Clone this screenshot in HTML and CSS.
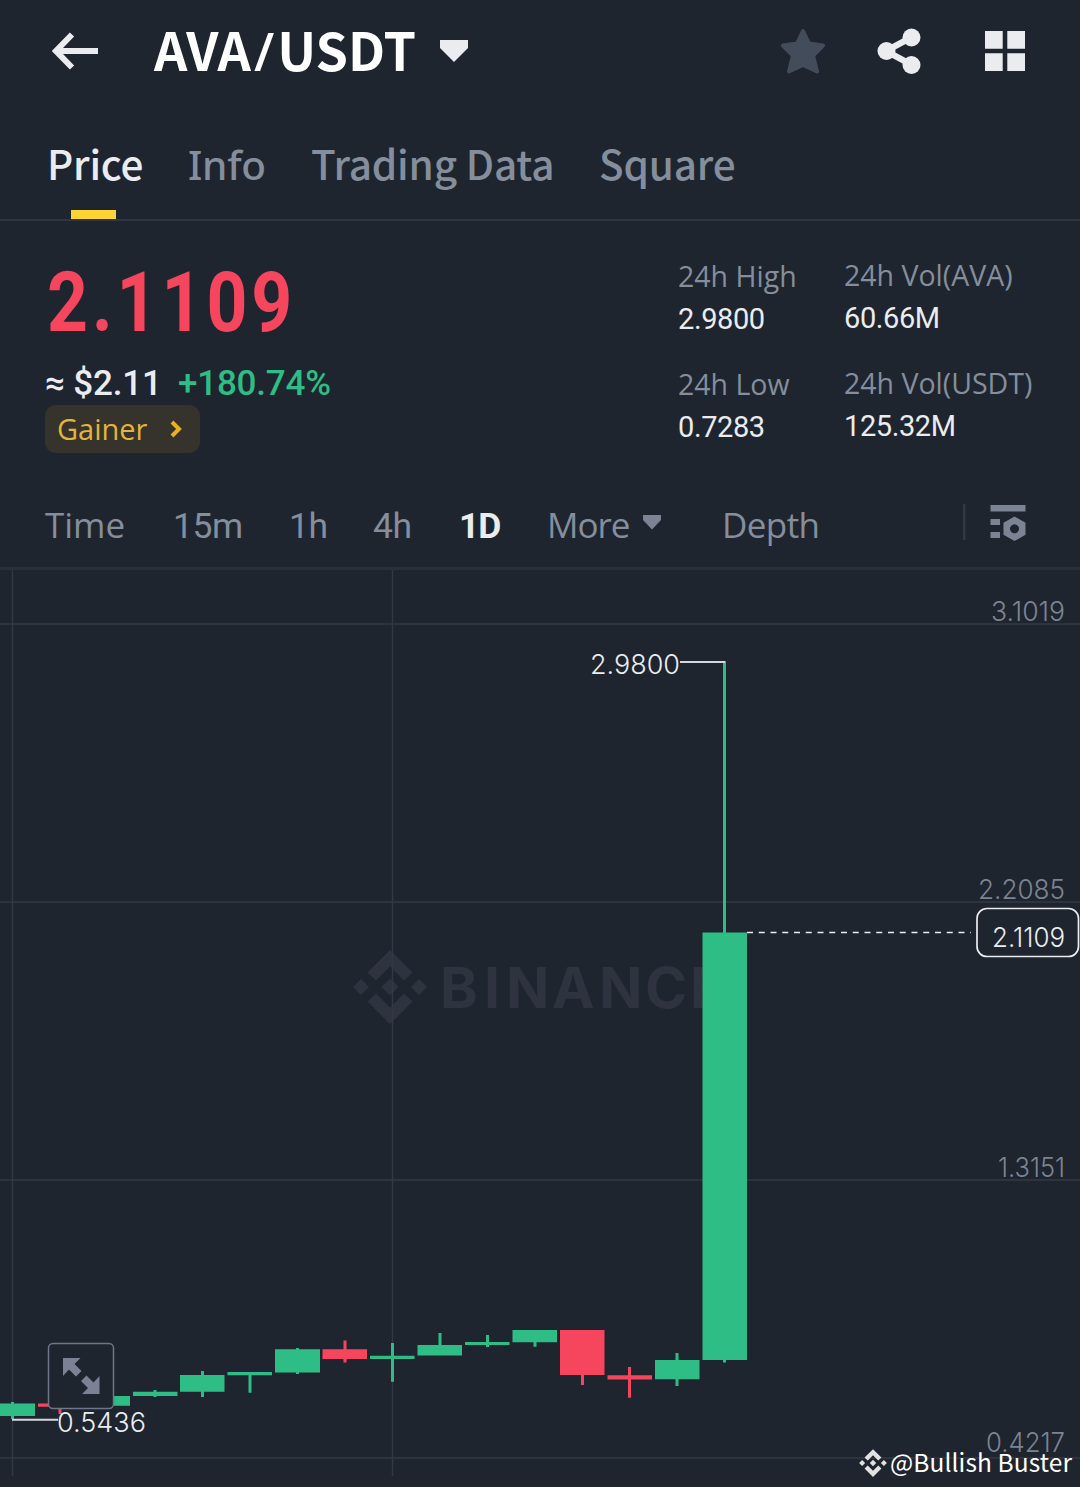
FILE: index.html
```html
<!DOCTYPE html>
<html lang="en">
<head>
<meta charset="utf-8">
<title>AVA/USDT</title>
<link rel="stylesheet" href="styles.css">
</head>
<body>
<header class="topbar">
  <svg class="back" width="46" height="38" viewBox="0 0 46 38"><path d="M20 2.500 4 19l16 16.500M4 19h42" fill="none" stroke="#eaecef" stroke-width="6"/></svg>
  <h1 class="pair"><span>AVA</span><span class="slash">/</span><span>USDT</span></h1>
  <svg class="caret" width="28" height="22" viewBox="0 0 28 22"><path d="M0 0h28v8L14 22 0 8z" fill="#eaecef"/></svg>
  <div class="actions">
    <svg width="46" height="46" viewBox="0 0 46 46"><path d="M23 3l6 12.500 14 2-10 10L37 43.500l-14-6.500-14 6.500 4-16-10-10 14-2z" fill="#434c5a" stroke="#434c5a" stroke-width="4" stroke-linejoin="round"/></svg>
    <svg width="44" height="46" viewBox="0 0 44 46"><path d="M35 9 9 23l26 14" fill="none" stroke="#eaecef" stroke-width="6.500"/><g fill="#eaecef"><circle cx="34.500" cy="9.500" r="9"/><circle cx="9.500" cy="23" r="9"/><circle cx="34.500" cy="37" r="9"/></g></svg>
    <svg width="40" height="40" viewBox="0 0 40 40"><path d="M0 0h17.700v17.700H0zM22.300 0H40v17.700H22.300zM0 22.300h17.700V40H0zM22.300 22.300H40V40H22.300z" fill="#eaecef"/></svg>
  </div>
</header>
<nav class="tabs">
  <a class="tab tab-price active"><span>Price</span></a>
  <a class="tab tab-info"><span>Info</span></a>
  <a class="tab tab-data"><span>Trading Data</span></a>
  <a class="tab tab-square"><span>Square</span></a>
</nav>
<section class="summary">
  <div class="quote">
    <div class="last"><span>2.1109</span></div>
    <div class="sub"><span class="fiat">≈ $2.11</span><span class="change">+180.74%</span></div>
    <a class="badge"><span>Gainer</span><svg width="13" height="18" viewBox="0 0 13 18"><path d="M2 2l7 7-7 7" fill="none" stroke="#e9b11f" stroke-width="4"/></svg></a>
  </div>
  <div class="stats">
    <div class="stat"><span class="label">24h High</span><span class="value">2.9800</span></div>
    <div class="stat"><span class="label">24h Low</span><span class="value">0.7283</span></div>
  </div>
  <div class="stats stats-volume">
    <div class="stat"><span class="label">24h Vol(AVA)</span><span class="value">60.66M</span></div>
    <div class="stat"><span class="label">24h Vol(USDT)</span><span class="value">125.32M</span></div>
  </div>
</section>
<nav class="intervals">
  <a class="iv time"><span>Time</span></a>
  <a class="iv num m15"><span>15m</span></a>
  <a class="iv num h1"><span>1h</span></a>
  <a class="iv num h4"><span>4h</span></a>
  <a class="iv num d1"><span>1D</span></a>
  <a class="iv more"><span>More</span></a>
  <svg class="more-caret" width="18" height="15" viewBox="0 0 18 15"><path d="M0 0h18v5L9 14.500 0 5z" fill="#7c8494"/></svg>
  <a class="iv depth"><span>Depth</span></a>
  <svg class="settings" width="63" height="38" viewBox="963 504 63 38"><path d="M963 504h2.500v36H963z" fill="#323945"/><path d="M990.500 505h35v6.500h-35zM990.500 519h9.500v6h-9.500zM990.500 532h9.500v6h-9.500z" fill="#7c8494"/><path fill-rule="evenodd" d="M1014.500 516.500l11 6.300v11.900l-11 6.300-11-6.300v-11.900zM1014.500 524.300a4.500 4.500 0 1 0 .01 0z" fill="#7c8494"/></svg>
</nav>
<main class="chart">
<svg width="1080" height="917" viewBox="0 570 1080 917">
  <defs>
    <g id="mark"><path d="M0-37 22.500-14.500 14-6.500 0-20.500-14-6.500-22.500-14.500zM0 37 22.500 14.500 14 6.500 0 20.500-14 6.500-22.500 14.500zM0-8.500 8.500 0 0 8.500-8.500 0zM-29-8-21 0-29 8-37 0zM29-8 37 0 29 8 21 0z"/></g>
  </defs>
  <g fill="#2e333f"><use href="#mark" x="390" y="987"/><text class="wordmark" y="1008" x="440 484 506 552 599 645 690">BINANCE</text></g>
  <path d="M0 624h1080M0 902h1080M0 1180h1080M0 1458h1080" stroke="#2d343f" stroke-width="2"/>
  <path d="M12.500 570v906M392.500 570v906" stroke="#323944" stroke-width="1.500"/>
  <g class="axis">
    <text x="991" y="621" textLength="74" lengthAdjust="spacingAndGlyphs">3.1019</text>
    <text x="978" y="899" textLength="87" lengthAdjust="spacingAndGlyphs">2.2085</text>
    <text x="998" y="1177" textLength="67" lengthAdjust="spacingAndGlyphs">1.3151</text>
    <text x="986" y="1452" textLength="79" lengthAdjust="spacingAndGlyphs">0.4217</text>
  </g>
  <g class="up">
    <path d="M12.500 1402v17M155 1390v7M202.500 1371v26M250 1373v19.700M297.500 1348v26M392.500 1343v38.700M440 1333v20M487.500 1335v12M535 1340v6.700M677 1353v33M724.500 661v701.500"/>
    <path class="body" d="M0 1403.500h35v12.500H0zM85.500 1396H130v9.700H85.500zM133 1391.700h44.500v4.300H133zM180 1375h44.500v16.700H180zM227.500 1372h44.500v3.200h-44.500zM275 1349.300h45v23.300h-45zM370 1355.700h44.500v3.300H370zM417.500 1345H462v10.500h-44.500zM465 1342h44.500v3H465zM512.500 1330H557v12.300h-44.500zM655 1360h44.500v19.300H655zM702.500 932.500H747V1360h-44.500z"/>
  </g>
  <g class="down">
    <path d="M60 1405v9M345 1340.500v22M582.500 1370v15M629.500 1367v30.700"/>
    <path class="body" d="M38 1403.500h44.500v3.200H38zM322.500 1349.300H367v9.700h-44.500zM560 1330h44.500v45H560zM607.500 1375.300H652v4.300h-44.500z"/>
  </g>
  <path d="M680 662h45M12 1419.700h46" stroke="#d5d8de" stroke-width="2"/>
  <path d="M747 932.500h224" stroke="#eaecef" stroke-width="1.700" stroke-dasharray="6 5.750"/>
  <rect x="977" y="908.500" width="101.500" height="48" rx="10" fill="#1f252f" stroke="#eaecef" stroke-width="1.700"/>
  <g class="mark-text">
    <text x="590" y="674" textLength="90" lengthAdjust="spacingAndGlyphs">2.9800</text>
    <text x="992" y="947" textLength="73" lengthAdjust="spacingAndGlyphs">2.1109</text>
    <text x="57" y="1432" textLength="89" lengthAdjust="spacingAndGlyphs">0.5436</text>
  </g>
  <rect x="48.500" y="1343.500" width="65" height="65" rx="4.500" fill="#1f252f" stroke="#6f7687" stroke-width="1.500"/>
  <path d="M63 1358h17.500l-6 6 7 7-5.500 5.500-7-7-6 6.500zM99.500 1394H82l6-6-7-7 5.500-5.500 7 7 6-6.500z" fill="#7c8296"/>
  <use href="#mark" transform="translate(873 1463) scale(.375)" fill="#e2e2e2"/>
  <text class="credit" x="890" y="1472" textLength="182">@Bullish Buster</text>
</svg>
</main>
</body>
</html>
```
FILE: styles.css
```css
* { box-sizing: border-box; }
body { margin: 0; width: 1080px; height: 1487px; overflow: hidden; background: #1f252f; color: #eaecef; font-family: "Open Sans", "Noto Sans", sans-serif; }
svg { display: block; flex: none; }
span { white-space: nowrap; }

.topbar { display: flex; align-items: center; height: 104px; padding: 0 55px 2px 52px; }
.pair { display: flex; align-items: baseline; justify-content: space-between; width: 262px; margin: 0 24px 2px 56px; font-family: "Noto Sans CJK SC", sans-serif; font-size: 52px; line-height: 60px; font-weight: 700; color: #fff; }
.slash { font-family: "Open Sans", sans-serif; font-weight: 600; }
.actions { display: flex; align-items: center; margin-left: auto; }
.actions svg + svg { margin-left: 51px; }
.actions svg + svg + svg { margin-left: 64px; }

.tabs { display: flex; gap: 46px; height: 117px; padding: 34px 47px 0; border-bottom: 2px solid #2f3541; font-family: "Noto Sans CJK SC", sans-serif; font-size: 40.5px; line-height: 50px; font-weight: 500; letter-spacing: -0.2px; color: #848e9c; }
.active { display: flex; flex-direction: column; color: #eaecef; }
.active::after { content: ""; width: 45px; height: 9px; margin: 22px 0 0 24px; background: #fcd535; }
.tab-price { width: 95px; }
.tab-info { width: 77px; padding-top: 2px; font-family: "Noto Sans", sans-serif; letter-spacing: -0.3px; }
.tab-data { width: 242px; }
.tab-square { width: 135px; }

.summary { display: flex; height: 260px; padding-left: 45px; }
.quote { width: 633px; padding-top: 42px; font-family: Roboto, sans-serif; }
.last { font-size: 83px; line-height: 80px; font-weight: 700; color: #f6465d; letter-spacing: 4.6px; }
.last span { display: inline-block; transform: scaleX(.86); transform-origin: 0 0; margin-left: 2px; }
.sub { display: flex; gap: 18px; height: 44px; margin-top: 18px; padding-top: 1px; font-size: 35px; line-height: 44px; font-weight: 500; letter-spacing: -0.2px; }
.fiat { width: 115px; }
.change { color: #2ebd85; }
.badge { display: flex; align-items: center; justify-content: space-between; width: 155px; height: 48px; padding: 0 17px 0 12px; border-radius: 11px; background: #35332b; color: #e3b53a; font-family: "Open Sans", sans-serif; font-size: 29px; line-height: 46px; }
.stats { display: flex; flex-direction: column; gap: 23px; width: 166px; padding-top: 34px; }
.stats-volume { padding-top: 33px; }
.stat { display: flex; flex-direction: column; gap: 1px; line-height: 42px; }
.label { font-size: 28.5px; color: #848e9c; }
.value { font-family: Roboto, sans-serif; font-size: 29px; letter-spacing: -0.4px; }

.intervals { display: flex; align-items: baseline; height: 89px; padding: 19px 0 0 45px; border-bottom: 3px solid #29303a; font-size: 35px; line-height: 50px; color: #848e9c; }
.num { font-family: Roboto, sans-serif; font-size: 35.5px; letter-spacing: -0.5px; }
.time { width: 128px; }
.m15 { width: 116px; }
.h1 { width: 84px; }
.h4 { width: 86px; }
.d1 { width: 88px; font-weight: 700; color: #eaecef; letter-spacing: -1px; }
.more { width: 96px; letter-spacing: -1px; }
.more-caret { align-self: flex-start; margin: 15px 61px 0 0; }
.depth { width: 241px; letter-spacing: -0.6px; }
.settings { align-self: flex-start; margin-top: 4px; }

.chart { height: 917px; }
.axis text, .mark-text text { font-family: Inter, sans-serif; font-size: 26.5px; font-weight: 300; }
.axis { fill: #7c8492; }
.mark-text { fill: #eaecef; }
.wordmark { font-family: Inter, sans-serif; font-size: 57px; font-weight: 700; }
.up { stroke: #2ebd85; fill: #2ebd85; stroke-width: 3; }
.down { stroke: #f6465d; fill: #f6465d; stroke-width: 3; }
.body { stroke: none; }
.credit { font-family: "Noto Sans CJK SC", sans-serif; font-size: 24.5px; font-weight: 400; fill: #fff; }
```
